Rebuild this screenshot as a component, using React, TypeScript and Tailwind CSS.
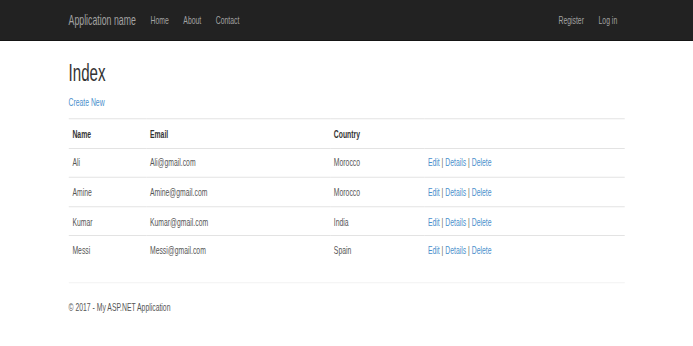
import React from 'react';

// The reference is an ASP.NET MVC / Bootstrap 3 page captured at ~1421x433
// and squeezed into 693x346, so the page is laid out at full size and scaled.

const PEOPLE = [
  { name: 'Ali', email: 'Ali@gmail.com', country: 'Morocco' },
  { name: 'Amine', email: 'Amine@gmail.com', country: 'Morocco' },
  { name: 'Kumar', email: 'Kumar@gmail.com', country: 'India' },
  { name: 'Messi', email: 'Messi@gmail.com', country: 'Spain' },
];

const NavLink = ({ children }: { children: React.ReactNode }) => (
  <a className="block px-[15px] py-[15px] text-[14px] leading-5 text-[#a3a3a3]">{children}</a>
);

const Navbar = () => (
  <div className="h-[51px] bg-[#222] border-b border-[#080808]">
    <div className="mx-auto w-[1170px] px-[15px] flex items-center justify-between">
      <div className="flex items-center">
        <a className="block pr-[15px] py-[15px] text-[18px] leading-5 text-[#a3a3a3]">Application name</a>
        <NavLink>Home</NavLink>
        <NavLink>About</NavLink>
        <NavLink>Contact</NavLink>
      </div>
      <div className="flex items-center">
        <NavLink>Register</NavLink>
        <NavLink>Log in</NavLink>
      </div>
    </div>
  </div>
);

const PeopleTable = () => (
  <table className="w-full mb-[22px] border-collapse table-fixed">
    <colgroup>
      <col className="w-[159px]" />
      <col className="w-[377px]" />
      <col className="w-[193px]" />
      <col />
    </colgroup>
    <tbody>
      <tr>
        <th className="px-2 py-[7.8px] leading-5 text-left align-bottom font-bold text-[#333] border-t border-[#ddd]">Name</th>
        <th className="px-2 py-[7.8px] leading-5 text-left align-bottom font-bold text-[#333] border-t border-[#ddd]">Email</th>
        <th className="px-2 py-[7.8px] leading-5 text-left align-bottom font-bold text-[#333] border-t border-[#ddd]">Country</th>
        <th className="px-2 py-[7.8px] leading-5 border-t border-[#ddd]"></th>
      </tr>
      {PEOPLE.map((p) => (
        <tr key={p.email}>
          <td className="px-2 py-[7.8px] leading-5 align-top border-t border-[#ddd]">{p.name}</td>
          <td className="px-2 py-[7.8px] leading-5 align-top border-t border-[#ddd]">{p.email}</td>
          <td className="px-2 py-[7.8px] leading-5 align-top border-t border-[#ddd]">{p.country}</td>
          <td className="px-2 py-[7.8px] leading-5 align-top border-t border-[#ddd]">
            <a className="text-[#4a8fcc]">Edit</a> | <a className="text-[#4a8fcc]">Details</a> |{' '}
            <a className="text-[#4a8fcc]">Delete</a>
          </td>
        </tr>
      ))}
    </tbody>
  </table>
);

const App = () => {
  return (
    <div className="w-[693px] h-[346px] overflow-hidden bg-white">
      <div className="w-[1421px] h-[433px] origin-top-left scale-x-[0.4877] scale-y-[0.8] font-['Liberation_Sans',Arial,sans-serif] text-[14px] text-[#555]">
        <Navbar />
        <div className="mx-auto w-[1170px] px-[15px] pt-[3px]">
          <h2 className="mt-5 mb-[10px] text-[31px] leading-[1.1] font-normal text-[#333]">Index</h2>
          <p className="mb-[10px] leading-5">
            <a className="text-[#4a8fcc]">Create New</a>
          </p>
          <PeopleTable />
          <hr className="border-0 border-t border-[#eee] my-5" />
          <footer>
            <p className="mb-[10px] leading-5">© 2017 - My ASP.NET Application</p>
          </footer>
        </div>
      </div>
    </div>
  );
};

export default App;
